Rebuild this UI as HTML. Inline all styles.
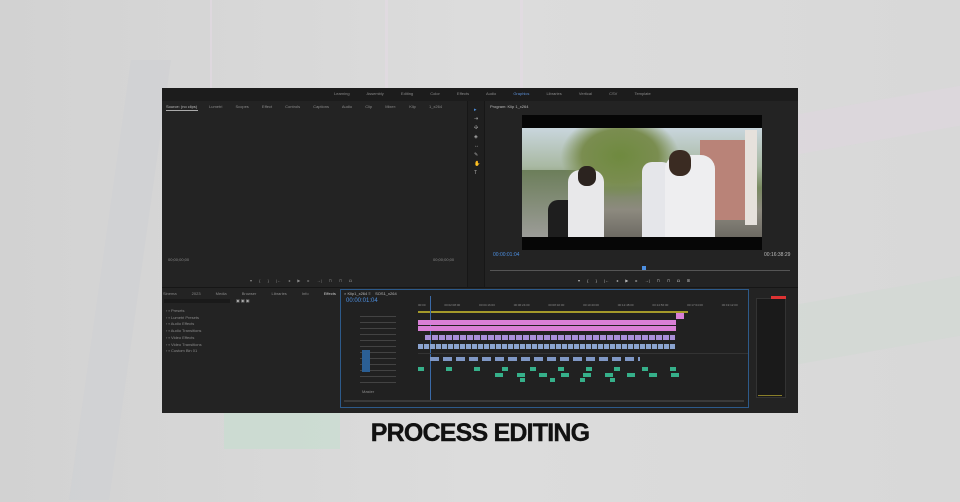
<!DOCTYPE html>
<html><head><style>
*{margin:0;padding:0;box-sizing:border-box}
body{width:960px;height:502px;overflow:hidden;background:#dadada;position:relative;font-family:"Liberation Sans",sans-serif}
.a{position:absolute}
.t{position:absolute;font-size:4px;color:#8a8a8a;white-space:nowrap}
</style></head><body>
<div class="a" style="left:0;top:0;width:960px;height:502px;background:linear-gradient(90deg,#d2d2d2 0%,#d6d6d6 20%,#dcdcdc 50%,#d8d8d8 100%)"></div>
<div class="a" style="left:100px;top:60px;width:40px;height:440px;background:#cdd0d4;opacity:.5;transform:skewX(-8deg)"></div>
<div class="a" style="left:210px;top:0;width:2px;height:88px;background:#e2d8e2;opacity:.6"></div>
<div class="a" style="left:385px;top:0;width:3px;height:88px;background:#e4dbe4;opacity:.6"></div>
<div class="a" style="left:520px;top:0;width:3px;height:88px;background:#e4dbe4;opacity:.6"></div>
<div class="a" style="left:798px;top:100px;width:162px;height:40px;background:#e0d6e0;opacity:.5;transform:skewY(-10deg)"></div>
<div class="a" style="left:798px;top:290px;width:162px;height:60px;background:#cfd9d2;opacity:.5;transform:skewY(-10deg)"></div>
<div class="a" style="left:224px;top:413px;width:116px;height:36px;background:#c9dcd1;opacity:.8"></div>

<div class="a" style="left:162px;top:88px;width:636px;height:325px;background:#232323"></div>
<div class="a" style="left:162px;top:88px;width:636px;height:13px;background:#1c1c1c"></div>
<div class="t" style="left:334px;top:91px;word-spacing:16px">Learning Assembly Editing Color Effects Audio <span style="color:#5b8fd6">Graphics</span> Libraries Vertical CSV&nbsp;Template</div>
<div class="a" style="left:162px;top:101px;width:306px;height:186px;background:#232323;border-right:1px solid #171717"></div>
<div class="t" style="left:166px;top:104px;color:#bbb">Source: (no clips)</div>
<div class="a" style="left:166px;top:110px;width:32px;height:1px;background:#aaa"></div>
<div class="t" style="left:209px;top:104px;word-spacing:12px">Lumetri&nbsp;Scopes Effect&nbsp;Controls Captions Audio&nbsp;Clip&nbsp;Mixer:&nbsp;Klip&nbsp;1_x264</div>
<div class="t" style="left:168px;top:257px">00;00;00;00</div>
<div class="t" style="left:433px;top:257px">00;00;00;00</div>
<div class="t" style="left:250px;top:278px;word-spacing:6px">▾ { } |← ◂ ▶ ▸ →| ⊓ ⊓ ◘</div>
<div class="a" style="left:468px;top:101px;width:17px;height:186px;background:#1f1f1f;border-right:1px solid #171717"></div>
<div class="t" style="left:474px;top:106px;line-height:9px;color:#aaa;font-size:5px"><span style="color:#4d8fe0">▸</span><br>⇥<br>✣<br>◈<br>↔<br>✎<br>✋<br>T</div>
<div class="t" style="left:490px;top:104px;color:#bbb">Program: Klip 1_x264</div>
<div class="a" style="left:522px;top:115px;width:240px;height:135px;background:#060606"></div>
<div class="a" style="left:522px;top:128px;width:240px;height:109px;background:linear-gradient(180deg,#c9d6dd 0%,#a9b9a3 35%,#7a8a62 55%,#8d8a7f 75%,#6d6a63 100%)"></div>
<div class="a" style="left:522px;top:170px;width:60px;height:67px;background:linear-gradient(180deg,#6c7e5a,#9c9c98)"></div>
<div class="a" style="left:560px;top:128px;width:120px;height:70px;background:radial-gradient(ellipse at 50% 40%,#6f8a3f 0%,#7a8d50 45%,transparent 70%)"></div>
<div class="a" style="left:700px;top:140px;width:55px;height:80px;background:#b98378"></div>
<div class="a" style="left:745px;top:130px;width:12px;height:95px;background:#e6e1dc"></div>
<div class="a" style="left:548px;top:200px;width:30px;height:37px;background:#1e1e1e;border-radius:10px 10px 0 0"></div>
<div class="a" style="left:568px;top:170px;width:36px;height:67px;background:#e8e8ea;border-radius:12px 12px 0 0"></div>
<div class="a" style="left:578px;top:166px;width:18px;height:20px;background:#2b231f;border-radius:8px"></div>
<div class="a" style="left:642px;top:162px;width:30px;height:75px;background:#e5e6ea;border-radius:10px 10px 0 0"></div>
<div class="a" style="left:665px;top:155px;width:50px;height:82px;background:#eeeef0;border-radius:14px 14px 0 0"></div>
<div class="a" style="left:669px;top:150px;width:22px;height:26px;background:#3a2b22;border-radius:10px"></div>
<div class="t" style="left:493px;top:252px;color:#4d8fe0;font-size:5px">00:00:01:04</div>
<div class="t" style="left:764px;top:252px;color:#bbb;font-size:5px">00:16:38:29</div>
<div class="a" style="left:490px;top:270px;width:300px;height:1px;background:#555"></div>
<div class="a" style="left:642px;top:266px;width:4px;height:4px;background:#4d8fe0"></div>
<div class="t" style="left:578px;top:278px;word-spacing:6px;color:#bbb">▾ { } |← ◂ ▶ ▸ →| ⊓ ⊓ ◘ ⊞</div>
<div class="a" style="left:162px;top:287px;width:636px;height:1px;background:#161616"></div>
<div class="t" style="left:163px;top:291px;word-spacing:14px">Sinema&nbsp;2023 Media&nbsp;Browser Libraries Info <span style="color:#ccc">Effects</span> Mar</div>
<div class="a" style="left:164px;top:299px;width:66px;height:4px;background:#1a1a1a"></div>
<div class="t" style="left:236px;top:298px;color:#aaa">▣ ▣ ▣</div>
<div class="t" style="left:166px;top:308px;line-height:6.7px;font-size:4px">› ▪ Presets<br>› ▪ Lumetri Presets<br>› ▪ Audio Effects<br>› ▪ Audio Transitions<br>› ▪ Video Effects<br>› ▪ Video Transitions<br>› ▪ Custom Bin 01</div>
<div class="a" style="left:340px;top:289px;width:409px;height:119px;border:1px solid #2d5a8a;background:#212121"></div>
<div class="t" style="left:344px;top:291px;color:#bbb">× Klip1_x264 ≡ &nbsp;&nbsp; SOS1_x264</div>
<div class="t" style="left:346px;top:298px;color:#4d8fe0;font-size:6px">00:00:01:04</div>
<div class="t" style="left:418px;top:303px;word-spacing:18px;font-size:3px">00:00 00:02:08:00 00:04:16:00 00:06:24:00 00:08:32:00 00:10:40:00 00:12:48:00 00:14:56:00 00:17:04:00 00:19:12:00</div>
<div class="a" style="left:418px;top:311px;width:270px;height:2px;background:#a49a2a"></div>
<div class="a" style="left:430px;top:296px;width:1px;height:104px;background:#3a6aa8"></div>
<div class="a" style="left:418px;top:320px;width:258px;height:5px;background:#d97fd6"></div>
<div class="a" style="left:418px;top:326px;width:258px;height:5px;background:#d97fd6"></div>
<div class="a" style="left:676px;top:313px;width:8px;height:6px;background:#d97fd6"></div>
<div class="a" style="left:425px;top:335px;width:250px;height:5px;background:repeating-linear-gradient(90deg,#a98fd8 0 6px,#2a2a2a 6px 7px)"></div>
<div class="a" style="left:418px;top:344px;width:257px;height:5px;background:repeating-linear-gradient(90deg,#8aa3cf 0 5px,#2a2a2a 5px 6px)"></div>
<div class="a" style="left:360px;top:316px;width:36px;height:72px;background:repeating-linear-gradient(180deg,#5a5a5a 0 1px,transparent 1px 6px);opacity:.6"></div>
<div class="a" style="left:362px;top:350px;width:8px;height:22px;background:#2b5f95"></div>
<div class="a" style="left:418px;top:353px;width:330px;height:1px;background:#333"></div>
<div class="a" style="left:430px;top:357px;width:210px;height:4px;background:repeating-linear-gradient(90deg,#7f97c4 0 9px,transparent 9px 13px)"></div>
<div class="a" style="left:418px;top:367px;width:270px;height:4px;background:repeating-linear-gradient(90deg,#36b08a 0 6px,transparent 6px 28px)"></div>
<div class="a" style="left:495px;top:373px;width:195px;height:4px;background:repeating-linear-gradient(90deg,#36b08a 0 8px,transparent 8px 22px)"></div>
<div class="a" style="left:520px;top:378px;width:120px;height:4px;background:repeating-linear-gradient(90deg,#36b08a 0 5px,transparent 5px 30px)"></div>
<div class="t" style="left:362px;top:389px">Master</div>
<div class="a" style="left:344px;top:400px;width:400px;height:2px;background:#3a3a3a"></div>
<div class="a" style="left:756px;top:298px;width:30px;height:100px;background:#1a1a1a;border:1px solid #333"></div>
<div class="a" style="left:771px;top:296px;width:15px;height:3px;background:#d33"></div>
<div class="a" style="left:758px;top:395px;width:24px;height:1px;background:#8a7f2a"></div>
<div class="a" style="left:300px;top:419px;width:360px;text-align:center;font-weight:bold;font-size:25px;letter-spacing:-0.8px;color:#111;-webkit-text-stroke:0.4px #111">PROCESS EDITING</div>
</body></html>
